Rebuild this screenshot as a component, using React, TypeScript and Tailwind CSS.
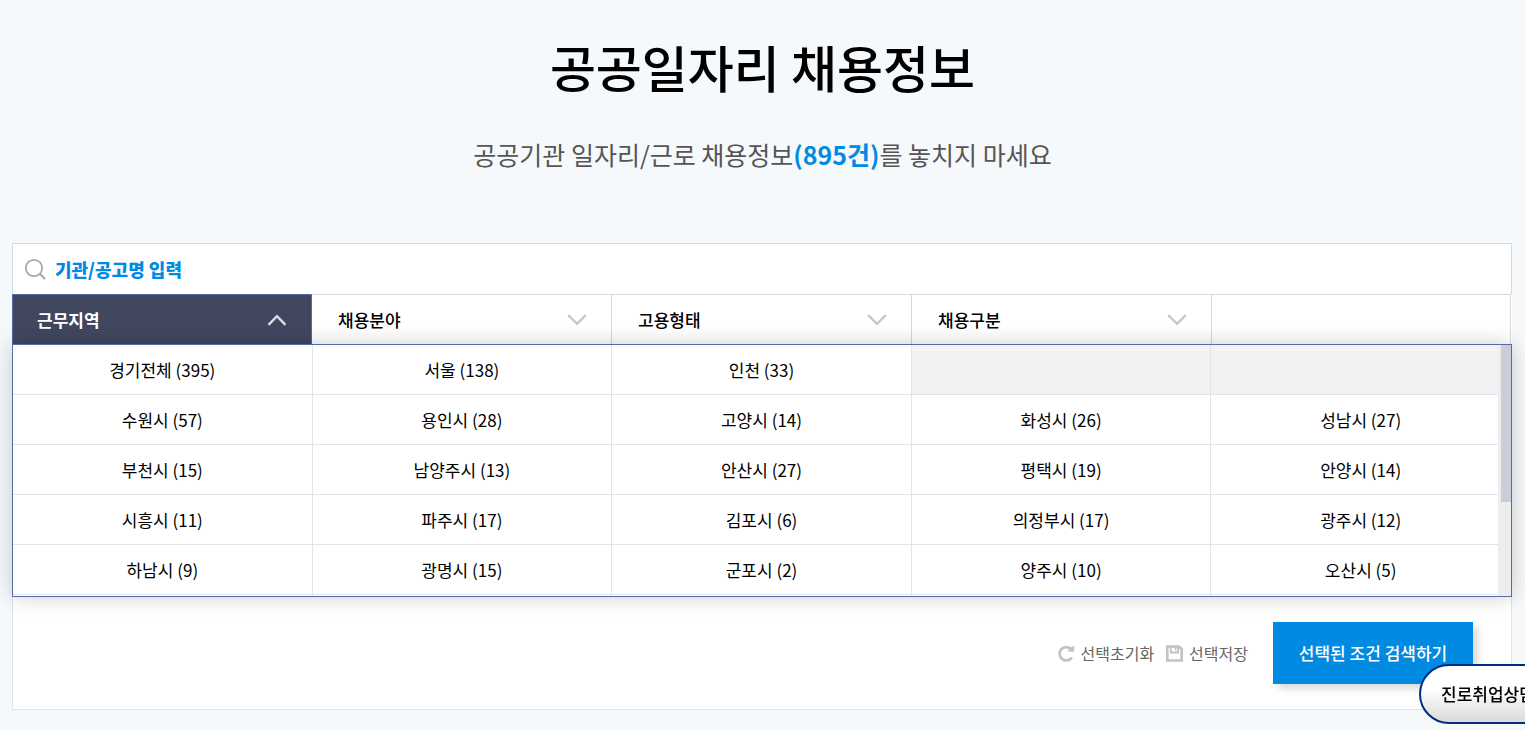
import { useState } from "react";

const tabs = ["근무지역", "채용분야", "고용형태", "채용구분"];

const regions: (string | null)[] = [
  "경기전체 (395)", "서울 (138)", "인천 (33)", null, null,
  "수원시 (57)", "용인시 (28)", "고양시 (14)", "화성시 (26)", "성남시 (27)",
  "부천시 (15)", "남양주시 (13)", "안산시 (27)", "평택시 (19)", "안양시 (14)",
  "시흥시 (11)", "파주시 (17)", "김포시 (6)", "의정부시 (17)", "광주시 (12)",
  "하남시 (9)", "광명시 (15)", "군포시 (2)", "양주시 (10)", "오산시 (5)",
];

function SearchIcon() {
  return (
    <svg width="21" height="22" viewBox="0 0 21 22" fill="none" stroke="#a9a9a9" aria-hidden="true">
      <circle cx="9" cy="10" r="8.2" strokeWidth="1.8" />
      <path d="M14.8 15.8L20 21" strokeWidth="2.2" />
    </svg>
  );
}

function Chevron({ open }: { open: boolean }) {
  return (
    <svg width="20" height="12" viewBox="0 0 20 12" fill="none" strokeWidth="2.4" aria-hidden="true">
      {open ? (
        <path d="M1.5 10.8L10 2.2L18.5 10.8" stroke="#dcdde2" />
      ) : (
        <path d="M1.2 1.2L10 9.8L18.8 1.2" stroke="#c8c8c8" />
      )}
    </svg>
  );
}

function ResetIcon() {
  return (
    <svg width="17" height="17" viewBox="0 0 17 17" fill="none" aria-hidden="true">
      <path d="M13.9 12.4A6.7 6.7 0 1 1 13 4" stroke="#c2c2c2" strokeWidth="2.7" />
      <path d="M16.2 0.8V6.8H10.2V5.4L14.2 1.4Z" fill="#c2c2c2" />
    </svg>
  );
}

function SaveIcon() {
  return (
    <svg width="17" height="17" viewBox="0 0 17 17" fill="none" stroke="#c2c2c2" aria-hidden="true">
      <path d="M1.3 1.5H13.2L15.7 4V15.5H1.3Z" strokeWidth="2.6" />
      <path d="M4.8 1.5V7.5H12.2V1.5" strokeWidth="1.8" />
      <path d="M9.6 2V5.4" strokeWidth="1.8" />
    </svg>
  );
}

export default function App() {
  const [active, setActive] = useState(0);
  const [keyword, setKeyword] = useState("");

  return (
    <div className="min-h-screen overflow-hidden bg-[#f5f9fc] pb-5 font-['Noto_Sans_CJK_KR','Noto_Sans',sans-serif] text-black">
      <header className="pt-7 text-center">
        <h1 className="text-[50px] leading-[76px] font-medium">공공일자리 채용정보</h1>
        <p className="mt-8 text-[25px] leading-9 text-[#555]">
          공공기관 일자리/근로 채용정보<strong className="font-bold text-[#008ae2]">(895건)</strong>를 놓치지 마세요
        </p>
      </header>

      <main className="mt-[71px] mr-[13px] ml-3 bg-white">
        <div className="flex h-[51px] items-center gap-[9px] border border-b-0 border-[#d9d9d9] pl-3">
          <label htmlFor="keyword"><SearchIcon /></label>
          <input
            id="keyword"
            aria-label="기관/공고명 입력"
            placeholder="기관/공고명 입력"
            value={keyword}
            onChange={(e) => setKeyword(e.target.value)}
            className="h-full flex-1 bg-transparent text-[18px] font-black text-[#008ae2] outline-none placeholder:text-[#008ae2]"
          />
        </div>

        <div className="grid h-[50px] grid-cols-5">
          {tabs.map((name, i) => (
            <button
              key={name}
              type="button"
              aria-expanded={i === active}
              onClick={() => setActive(i)}
              className={
                i === active
                  ? "flex items-center justify-between border border-b-0 border-[#566ba5] bg-[#40475f] pr-6 pl-6 text-[17px] font-bold text-white"
                  : "flex items-center justify-between border-t border-r border-[#d9d9d9] pr-6 pl-[26px] text-[17px] font-medium"
              }
            >
              {name}
              <Chevron open={i === active} />
            </button>
          ))}
          <div className="mr-px border-t border-r border-[#d9d9d9]" />
        </div>

        <section className="relative z-10 h-[253px] overflow-hidden border border-[#566ba5] bg-white shadow-[0_0_20px_rgba(0,0,0,0.2)]">
          <ul className="grid auto-rows-[50px] grid-cols-5">
            {regions.map((name, i) => (
              <li
                key={name ?? `blank-${i}`}
                className={
                  name
                    ? "border-r border-b border-[#e1e4eb]"
                    : "border-r border-b border-[#e1e4eb] bg-[#f2f2f2]"
                }
              >
                {name && (
                  <button type="button" className="h-full w-full text-[17px]">{name}</button>
                )}
              </li>
            ))}
            {tabs.map((name) => (
              <li key={`more-${name}`} className="border-r border-[#e1e4eb]" />
            ))}
          </ul>
          <div className="absolute inset-y-0 right-0 w-[13px] bg-[#ededed]">
            <div className="ml-auto h-[157px] w-[10px] bg-[#cbced9]" />
          </div>
        </section>

        <div className="flex items-center justify-end border border-t-0 border-[#e1e4e8] pt-[25px] pr-[38px] pb-[25px]">
          <button type="button" className="flex items-center gap-[6px] text-[16px] text-[#666]">
            <ResetIcon />선택초기화
          </button>
          <button type="button" className="ml-3 flex items-center gap-[6px] text-[16px] text-[#666]">
            <SaveIcon />선택저장
          </button>
          <button
            type="button"
            className="ml-[25px] h-[62px] w-[200px] bg-[#008ae2] text-[17px] font-medium text-white shadow-[5px_5px_7px_rgba(0,0,0,0.14)]"
          >
            선택된 조건 검색하기
          </button>
        </div>
      </main>

      <a
        href="#counsel"
        className="fixed -right-[34px] bottom-[6px] z-20 flex h-[60px] w-[140px] items-center rounded-full border-2 border-[#002d7d] bg-gradient-to-b from-white from-40% to-[#dadada] pl-5 text-[17px] font-medium whitespace-nowrap"
      >
        진로취업상담
      </a>
    </div>
  );
}
